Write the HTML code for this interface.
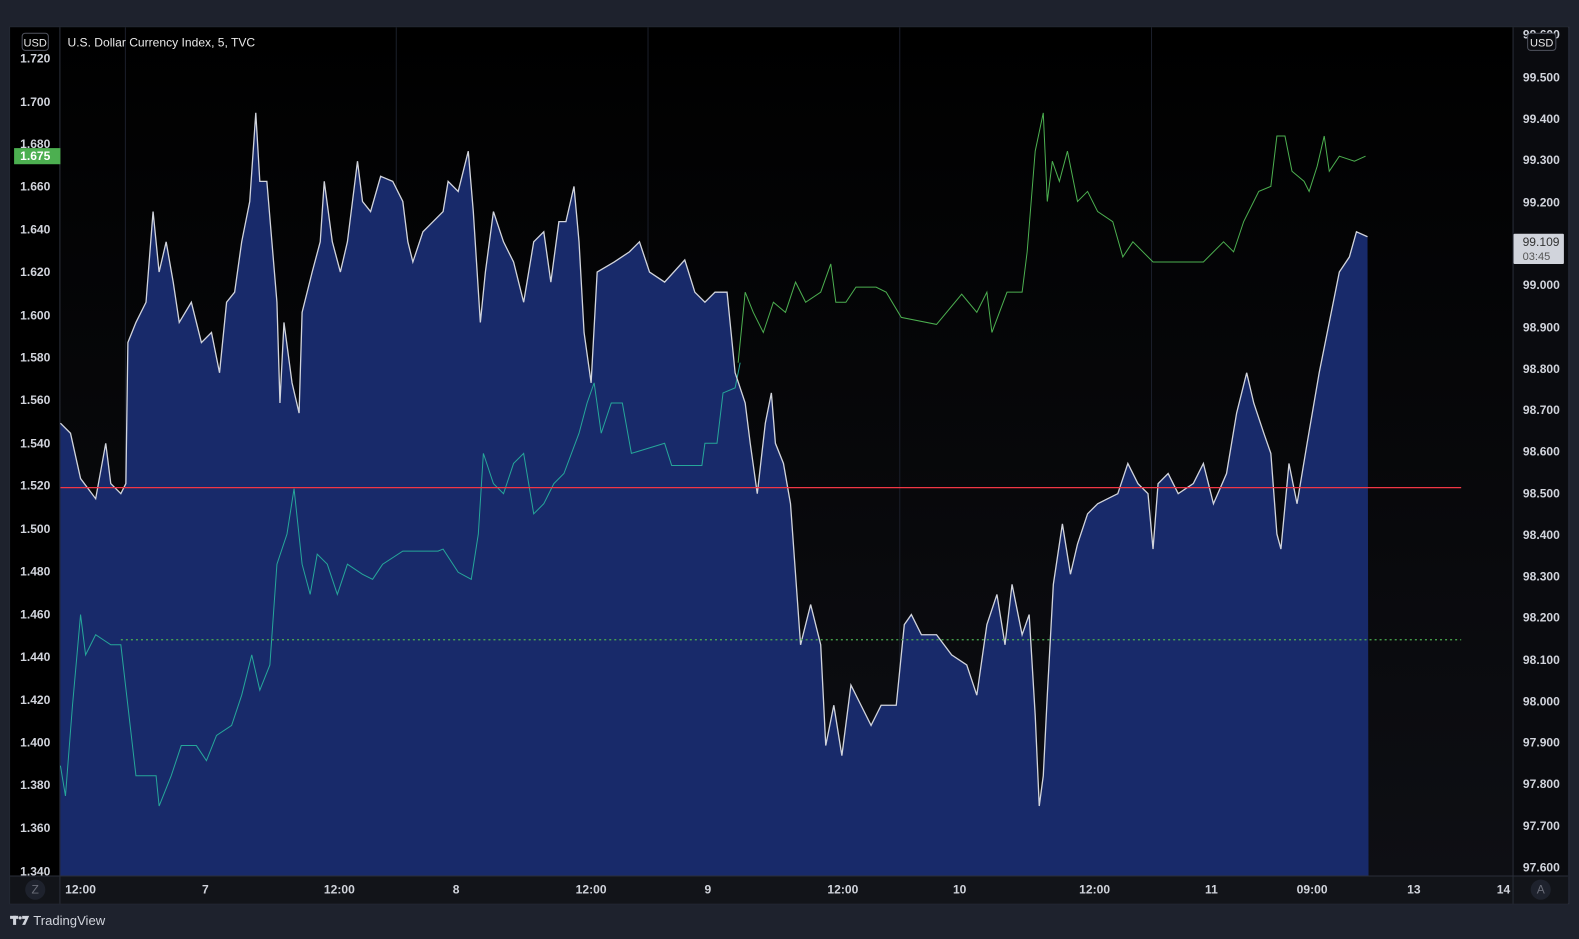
<!DOCTYPE html>
<html><head><meta charset="utf-8"><style>
html,body{margin:0;padding:0;background:#1e222d;width:1579px;height:939px;overflow:hidden}
svg{display:block}
text{font-family:"Liberation Sans",sans-serif;font-size:12px;fill:#d1d4dc}
.l{font-weight:bold;fill:#e8e8e8}
</style></head><body>
<svg width="1579" height="939" viewBox="0 0 1568 932" preserveAspectRatio="none">
<defs><linearGradient id="bg" x1="0" y1="0" x2="0" y2="1"><stop offset="0" stop-color="#000"/><stop offset="1" stop-color="#0e0f14"/></linearGradient></defs>
<rect x="0" y="0" width="1568" height="932" fill="#1e222d"/>
<rect x="10" y="27" width="1548" height="870" fill="#131722" stroke="#2a2e39"/>
<rect x="59" y="27" width="1443" height="842" fill="url(#bg)"/>
<rect x="10" y="27" width="49" height="842" fill="#000"/>
<rect x="1502" y="27" width="55" height="842" fill="#0a0b0f"/>
<rect x="10" y="869" width="1547" height="28" fill="#121419"/>
<g stroke="#2a2e39" stroke-width="1">
<line x1="59.5" y1="27" x2="59.5" y2="897"/>
<line x1="1502.5" y1="27" x2="1502.5" y2="897"/>
<line x1="10" y1="869.5" x2="1557" y2="869.5"/>
</g>
<g stroke="#1b1f2b" stroke-width="1">
<line x1="124.5" y1="27" x2="124.5" y2="869"/><line x1="393.5" y1="27" x2="393.5" y2="869"/><line x1="643.5" y1="27" x2="643.5" y2="869"/><line x1="893.5" y1="27" x2="893.5" y2="869"/><line x1="1143.5" y1="27" x2="1143.5" y2="869"/>
</g>
<polygon fill="#182a6a" points="60,869 60,420 70,430 80,475 95,495 105,440 110,480 120,490 125,480 127,340 135,320 145,300 152,210 158,270 165,240 172,280 178,320 190,300 200,340 210,330 218,370 225,300 233,290 240,240 248,200 254,112 258,180 265,180 270,240 275,300 278,400 282,320 290,380 297,410 300,310 310,270 318,240 322,180 330,240 338,270 345,240 355,160 360,200 368,210 378,175 390,180 400,200 405,240 410,260 420,230 430,220 440,210 445,180 455,190 465,150 470,210 477,320 482,270 490,210 500,240 510,260 520,300 530,240 540,230 547,280 555,220 562,220 570,185 575,240 580,330 587,380 593,270 610,260 625,250 635,240 645,270 660,280 680,258 690,290 700,300 710,290 722,290 730,370 740,400 745,440 752,490 760,420 766,390 770,440 778,460 785,500 795,640 805,600 815,640 820,740 828,700 836,750 845,680 855,700 865,720 875,700 890,700 898,620 905,610 915,630 930,630 945,650 960,660 970,690 980,620 990,590 998,640 1005,580 1015,630 1022,610 1028,710 1032,800 1036,770 1040,690 1046,580 1055,520 1063,570 1070,540 1080,510 1090,500 1100,495 1110,490 1120,460 1130,480 1140,490 1145,545 1150,480 1160,470 1170,490 1185,480 1195,460 1205,500 1218,470 1228,410 1238,370 1245,400 1255,430 1262,450 1268,530 1272,545 1280,460 1288,500 1298,440 1310,370 1318,330 1330,270 1340,255 1347,230 1358,235 1359,869"/>
<polyline fill="none" stroke="#26a69a" stroke-width="1" points="60,760 65,790 72,700 80,610 85,650 95,630 110,640 120,640 135,770 155,770 158,800 170,770 180,740 195,740 205,755 215,730 230,720 240,690 250,650 258,685 268,660 275,560 285,530 292,485 300,560 308,590 315,550 325,560 335,590 345,560 360,570 370,575 380,560 400,547 435,547 440,545 455,568 468,575 475,530 480,450 490,480 500,490 510,460 520,450 530,510 540,500 550,480 560,470 575,430 583,400 590,380 597,430 607,400 618,400 627,450 660,440 667,462 697,462 700,440 712,440 718,390 730,385 735,360"/>
<polyline fill="none" stroke="#4caf50" stroke-width="1" points="733,360 740,290 748,310 758,330 768,300 780,310 790,280 800,300 815,290 825,262 830,300 840,300 850,285 870,285 880,290 895,315 930,322 955,292 970,310 980,290 985,330 1000,290 1015,290 1020,250 1028,150 1036,112 1040,200 1045,160 1052,180 1060,150 1070,200 1080,190 1090,210 1105,220 1115,255 1125,240 1145,260 1195,260 1215,240 1225,250 1235,220 1250,190 1262,185 1268,135 1276,135 1283,170 1295,180 1300,190 1308,165 1315,135 1320,170 1330,155 1345,160 1356,155"/>
<polyline fill="none" stroke="#d1d4dc" stroke-width="1.3" points="60,420 70,430 80,475 95,495 105,440 110,480 120,490 125,480 127,340 135,320 145,300 152,210 158,270 165,240 172,280 178,320 190,300 200,340 210,330 218,370 225,300 233,290 240,240 248,200 254,112 258,180 265,180 270,240 275,300 278,400 282,320 290,380 297,410 300,310 310,270 318,240 322,180 330,240 338,270 345,240 355,160 360,200 368,210 378,175 390,180 400,200 405,240 410,260 420,230 430,220 440,210 445,180 455,190 465,150 470,210 477,320 482,270 490,210 500,240 510,260 520,300 530,240 540,230 547,280 555,220 562,220 570,185 575,240 580,330 587,380 593,270 610,260 625,250 635,240 645,270 660,280 680,258 690,290 700,300 710,290 722,290 730,370 740,400 745,440 752,490 760,420 766,390 770,440 778,460 785,500 795,640 805,600 815,640 820,740 828,700 836,750 845,680 855,700 865,720 875,700 890,700 898,620 905,610 915,630 930,630 945,650 960,660 970,690 980,620 990,590 998,640 1005,580 1015,630 1022,610 1028,710 1032,800 1036,770 1040,690 1046,580 1055,520 1063,570 1070,540 1080,510 1090,500 1100,495 1110,490 1120,460 1130,480 1140,490 1145,545 1150,480 1160,470 1170,490 1185,480 1195,460 1205,500 1218,470 1228,410 1238,370 1245,400 1255,430 1262,450 1268,530 1272,545 1280,460 1288,500 1298,440 1310,370 1318,330 1330,270 1340,255 1347,230 1358,235"/>
<line x1="60" y1="484" x2="1451" y2="484" stroke="#f23645" stroke-width="1.3"/>
<line x1="120" y1="635" x2="1451" y2="635" stroke="#4caf50" stroke-width="1.3" stroke-dasharray="2,3"/>
<rect x="22" y="33" width="26" height="17" rx="3" fill="#000" stroke="#50535e"/>
<text x="35" y="46" text-anchor="middle" class="l" style="font-size:11px;font-weight:normal">USD</text>
<text x="67" y="46" class="l" style="font-weight:normal">U.S. Dollar Currency Index, 5, TVC</text>
<g class="l" text-anchor="end">
<text x="50" y="62">1.720</text><text x="50" y="105">1.700</text><text x="50" y="147">1.680</text><text x="50" y="189">1.660</text><text x="50" y="232">1.640</text><text x="50" y="274">1.620</text><text x="50" y="317">1.600</text><text x="50" y="359">1.580</text><text x="50" y="401">1.560</text><text x="50" y="444">1.540</text><text x="50" y="486">1.520</text><text x="50" y="529">1.500</text><text x="50" y="571">1.480</text><text x="50" y="614">1.460</text><text x="50" y="656">1.440</text><text x="50" y="699">1.420</text><text x="50" y="741">1.400</text><text x="50" y="783">1.380</text><text x="50" y="826">1.360</text><text x="50" y="869">1.340</text>
</g>
<rect x="14" y="147" width="46" height="16" fill="#4caf50"/>
<text x="20" y="159" class="l" style="fill:#fff">1.675</text>
<g class="l" text-anchor="end">
<text x="1549" y="38">99.600</text><text x="1549" y="81">99.500</text><text x="1549" y="122">99.400</text><text x="1549" y="163">99.300</text><text x="1549" y="205">99.200</text><text x="1549" y="287">99.000</text><text x="1549" y="329">98.900</text><text x="1549" y="370">98.800</text><text x="1549" y="411">98.700</text><text x="1549" y="452">98.600</text><text x="1549" y="494">98.500</text><text x="1549" y="535">98.400</text><text x="1549" y="576">98.300</text><text x="1549" y="617">98.200</text><text x="1549" y="659">98.100</text><text x="1549" y="700">98.000</text><text x="1549" y="741">97.900</text><text x="1549" y="782">97.800</text><text x="1549" y="824">97.700</text><text x="1549" y="865">97.600</text>
</g>
<rect x="1517" y="33" width="28" height="17" rx="3" fill="#0a0b0f" stroke="#50535e"/>
<text x="1531" y="46" text-anchor="middle" class="l" style="font-size:11px;font-weight:normal">USD</text>
<rect x="1503" y="232" width="50" height="30" rx="1" fill="#d1d4dc"/>
<text x="1512" y="244" style="fill:#333;font-size:12px">99.109</text>
<text x="1512" y="258" style="fill:#555;font-size:11px">03:45</text>
<g class="l" text-anchor="middle">
<text x="80" y="887">12:00</text><text x="204" y="887">7</text><text x="337" y="887">12:00</text><text x="453" y="887">8</text><text x="587" y="887">12:00</text><text x="703" y="887">9</text><text x="837" y="887">12:00</text><text x="953" y="887">10</text><text x="1087" y="887">12:00</text><text x="1203" y="887">11</text><text x="1303" y="887">09:00</text><text x="1404" y="887">13</text><text x="1493" y="887">14</text>
</g>
<circle cx="35" cy="883" r="10" fill="#1e222d"/><text x="35" y="887" text-anchor="middle" style="fill:#6a6d78">Z</text>
<circle cx="1530" cy="883" r="10" fill="#1e222d"/><text x="1530" y="887" text-anchor="middle" style="fill:#6a6d78">A</text>
<g fill="#d1d4dc"><rect x="10" y="909" width="8" height="3"/><rect x="13" y="909" width="3" height="9"/><circle cx="20" cy="911" r="1.6"/><path d="M22 909h7l-4 9h-3l3-6h-3z"/></g>
<text x="33" y="918" style="fill:#d1d4dc;font-size:13px">TradingView</text>
</svg>
</body></html>
